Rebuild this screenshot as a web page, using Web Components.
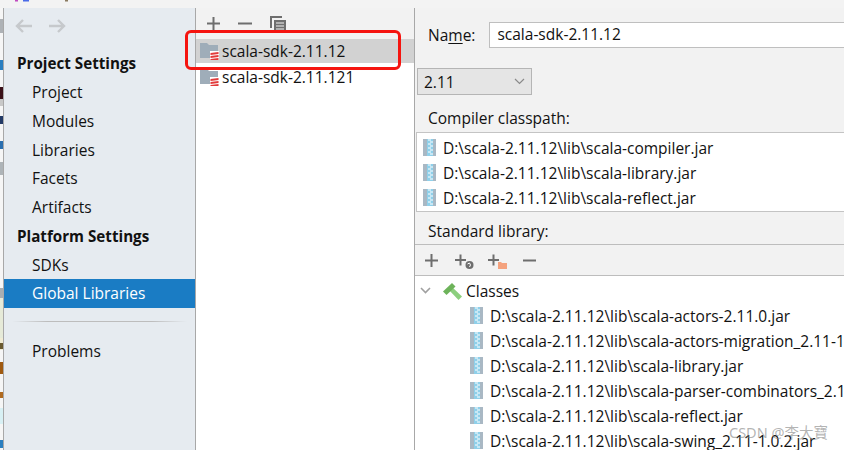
<!DOCTYPE html>
<html>
<head>
<meta charset="utf-8">
<title>Global Libraries</title>
<style>
  html, body { margin: 0; padding: 0; height: 100%; overflow: hidden; background: #fff; }
  body { font: 15.5px "Open Sans", "Noto Sans", sans-serif; color: #111; }
</style>
</head>
<body>
<settings-window></settings-window>

<template id="jar-icon">
  <svg width="13" height="17" viewBox="0 0 13 17"><rect width="13" height="17" fill="#a9b8c4"/><rect x="4" width="6" height="17" fill="#8fd0ea"/><path d="M5 1h3M7 3h3M5 5h3M7 7h3M5 9h3M7 11h3M5 13h3M7 15h3" stroke="#fff" stroke-width="1"/></svg>
</template>

<script>
// small helper, every component gets its own open shadow root
class Base extends HTMLElement {
    constructor() {
        super();
        this.attachShadow({ mode: 'open' });
    }
}

const jarSvg = () => document.getElementById('jar-icon').innerHTML;

class NavItem extends Base {
    connectedCallback() {
        this.shadowRoot.innerHTML = `
            <style>
                :host { display: flex; align-items: center; height: 28.75px; padding-left: 28px; color: #111; white-space: nowrap; }
                :host([heading]) { padding-left: 13px; font-weight: 700; font-size: 15.2px; }
                :host([active]) { background: #1a7cc4; color: #fff; }
            </style>
            <slot></slot>`;
    }
}
customElements.define('nav-item', NavItem);

class AppSidebar extends Base {
    connectedCallback() {
        this.shadowRoot.innerHTML = `
            <style>
                :host { display: flex; flex-direction: column; width: 191px; flex: none; background: #e6ebf0; border-right: 1px solid #a8a8a8; }
                .arrows { display: flex; gap: 15px; height: 35px; padding: 0 0 0 11px; box-sizing: border-box; align-items: center; }
                .sep { height: 1px; margin: 13.5px 8px 14.4px; background: linear-gradient(90deg, #e6ebf0, #bdbdbd 20%, #bdbdbd 80%, #e6ebf0); }
                .gap { height: 6px; }
            </style>
            <div class="arrows">
                <svg width="18" height="14" viewBox="0 0 18 14"><path d="M17 7H2M8 1 2 7l6 6" fill="none" stroke="#c6c9cc" stroke-width="2.4"/></svg>
                <svg width="18" height="14" viewBox="0 0 18 14"><path d="M1 7h15M10 1l6 6-6 6" fill="none" stroke="#c6c9cc" stroke-width="2.4"/></svg>
            </div>
            <div class="gap"></div>
            <nav-item heading>Project Settings</nav-item>
            <nav-item>Project</nav-item>
            <nav-item>Modules</nav-item>
            <nav-item>Libraries</nav-item>
            <nav-item>Facets</nav-item>
            <nav-item>Artifacts</nav-item>
            <nav-item heading>Platform Settings</nav-item>
            <nav-item>SDKs</nav-item>
            <nav-item active>Global Libraries</nav-item>
            <div class="sep"></div>
            <nav-item>Problems</nav-item>`;
    }
}
customElements.define('app-sidebar', AppSidebar);

class SdkRow extends Base {
    connectedCallback() {
        this.shadowRoot.innerHTML = `
            <style>
                :host { display: flex; align-items: center; gap: 3px; height: 24px; padding-left: 4px; white-space: nowrap; }
                :host([selected]) { background: #d2d2d2; }
                svg { flex: none; }
            </style>
            <svg width="19" height="18" viewBox="0 0 19 18">
                <path d="M0 1h7l2 2h9v13H0z" fill="#9fadb9"/>
                <rect x="10" y="9" width="9" height="9" fill="#fff"/>
                <path d="M10.5 11l8-1v2l-8 1zM10.5 14l8-1v2l-8 1zM10.5 17l8-1v2h-8z" fill="#e23b3b"/>
            </svg>
            <slot></slot>`;
    }
}
customElements.define('sdk-row', SdkRow);

class SdkList extends Base {
    connectedCallback() {
        this.shadowRoot.innerHTML = `
            <style>
                :host { display: flex; flex-direction: column; width: 218px; flex: none; background: #fff; border-right: 1px solid #a8a8a8; }
                .bar { display: flex; align-items: center; gap: 18px; height: 31px; padding-left: 11px; background: #f2f2f2; }
                svg { display: block; }
            </style>
            <div class="bar">
                <svg width="13" height="13" viewBox="0 0 13 13"><path d="M6.5 0v13M0 6.5h13" stroke="#6e6e6e" stroke-width="2"/></svg>
                <svg width="14" height="13" viewBox="0 0 14 13"><path d="M0 6.5h14" stroke="#6e6e6e" stroke-width="2"/></svg>
                <svg width="16" height="16" viewBox="0 0 16 16"><path d="M1 12V1h11" fill="none" stroke="#6e6e6e" stroke-width="2"/><rect x="4" y="4" width="12" height="12" fill="#6e6e6e"/><path d="M6 7h8M6 10h8M6 13h8" stroke="#f2f2f2" stroke-width="1.2"/></svg>
            </div>
            <sdk-row selected>scala-sdk-2.11.12</sdk-row>
            <sdk-row style="height:28px">scala-sdk-2.11.121</sdk-row>`;
    }
}
customElements.define('sdk-list', SdkList);

class JarRow extends Base {
    connectedCallback() {
        const indent = this.getAttribute('indent') || '6';
        this.shadowRoot.innerHTML = `
            <style>
                :host { display: flex; align-items: center; gap: 7px; height: 25px; padding-left: ${indent}px; white-space: nowrap; flex: none; }
                svg { flex: none; }
            </style>
            ${jarSvg()}
            <slot></slot>`;
    }
}
customElements.define('jar-row', JarRow);

class LibDetail extends Base {
    connectedCallback() {
        this.shadowRoot.innerHTML = `
            <style>
                :host { display: flex; flex-direction: column; flex: 1; min-width: 0; background: #f2f2f2; overflow: hidden; }
                .name { display: flex; align-items: center; height: 26px; margin-top: 14px; padding-left: 13px; }
                u { text-underline-offset: 2px; }
                .field { margin-left: 14px; flex: 1; height: 26px; box-sizing: border-box; border: 1px solid #bfbfbf; border-right: 0; background: #fff; padding-left: 7px; line-height: 23px; }
                .combo { display: flex; align-items: center; justify-content: space-between; width: 115px; height: 27px; box-sizing: border-box; margin: 20px 0 0 2px; padding: 0 6px 0 6px; border: 1px solid #b5b5b5; background: #e5e5e5; }
                .label { height: 26px; line-height: 26px; padding-left: 13px; margin-top: 10px; }
                .jars { height: 80px; margin-top: 1px; margin-left: 1px; background: #fff; border: 1px solid #c4c4c4; border-right: 0; box-sizing: border-box; padding-top: 2px; }
                .label2 { margin-top: 6px; height: 27px; line-height: 26px; padding-left: 13px; border-bottom: 1px solid #bdbdbd; box-sizing: border-box; }
                .bar { display: flex; align-items: center; height: 31px; padding-left: 10px; border-bottom: 1px solid #bdbdbd; box-sizing: border-box; }
                .tree { flex: 1; background: #fff; overflow: hidden; }
                .root { display: flex; align-items: center; height: 25px; padding: 2px 0 0 5px; }
                svg { display: block; flex: none; }
            </style>
            <div class="name"><span>Na<u>m</u>e:</span><div class="field">scala-sdk-2.11.12</div></div>
            <div class="combo"><span>2.11</span>
                <svg width="11" height="7" viewBox="0 0 11 7"><path d="M1 1l4.5 4.5L10 1" fill="none" stroke="#8a8a8a" stroke-width="1.2"/></svg></div>
            <div class="label">Compiler classpath:</div>
            <div class="jars">
                <jar-row>D:\\scala-2.11.12\\lib\\scala-compiler.jar</jar-row>
                <jar-row>D:\\scala-2.11.12\\lib\\scala-library.jar</jar-row>
                <jar-row>D:\\scala-2.11.12\\lib\\scala-reflect.jar</jar-row>
            </div>
            <div class="label2">Standard library:</div>
            <div class="bar">
                <svg width="13" height="13" viewBox="0 0 13 13" style="margin-right:17px"><path d="M6.5 0v13M0 6.5h13" stroke="#6e6e6e" stroke-width="2"/></svg>
                <svg width="19" height="18" viewBox="0 0 19 18" style="margin-right:14px"><path d="M5.5 3.5v11M0 9h11" stroke="#6e6e6e" stroke-width="2"/><circle cx="14.5" cy="14" r="4" fill="#6e6e6e"/><path d="M12.5 13l2-1 1 2-1 2" stroke="#fff" fill="none"/></svg>
                <svg width="19" height="18" viewBox="0 0 19 18" style="margin-right:16px"><path d="M5.5 3.5v11M0 9h11" stroke="#6e6e6e" stroke-width="2"/><path d="M10 11h3l1 1h5v6h-9z" fill="#f4a27e"/></svg>
                <svg width="13" height="13" viewBox="0 0 13 13"><path d="M0 6.5h13" stroke="#6e6e6e" stroke-width="2"/></svg>
            </div>
            <div class="tree">
                <div class="root">
                    <svg width="20" height="18" viewBox="0 0 20 18" style="display:none"></svg>
                    <svg width="11" height="7" viewBox="0 0 11 7" style="margin-right:12px"><path d="M1 1l4.500 4.500L10 1" fill="none" stroke="#a0a0a0" stroke-width="1.6"/></svg>
                    <svg width="20" height="18" viewBox="0 0 20 18" style="margin-right:3px"><path d="M5 7l3-3 11 10.500-3.500 3.500z" fill="#8ccf7e"/><path d="M0 9.500 9 1l3.500 3.500-9 8.500z" fill="#6db35a"/></svg>
                    <span>Classes</span>
                </div>
                <jar-row indent="55">D:\\scala-2.11.12\\lib\\scala-actors-2.11.0.jar</jar-row>
                <jar-row indent="55">D:\\scala-2.11.12\\lib\\scala-actors-migration_2.11-1</jar-row>
                <jar-row indent="55">D:\\scala-2.11.12\\lib\\scala-library.jar</jar-row>
                <jar-row indent="55">D:\\scala-2.11.12\\lib\\scala-parser-combinators_2.1</jar-row>
                <jar-row indent="55">D:\\scala-2.11.12\\lib\\scala-reflect.jar</jar-row>
                <jar-row indent="55">D:\\scala-2.11.12\\lib\\scala-swing_2.11-1.0.2.jar</jar-row>
            </div>`;
    }
}
customElements.define('lib-detail', LibDetail);

class SettingsWindow extends Base {
    connectedCallback() {
        this.shadowRoot.innerHTML = `
            <style>
                :host { display: flex; flex-direction: column; position: relative; width: 844px; height: 450px; overflow: hidden; }
                .top { height: 8px; flex: none; background: #f3f3f3; }
                .top svg, .edge svg { display: block; }
                .main { display: flex; flex: 1; min-height: 0; }
                .edge { width: 3px; flex: none; background: #f6f6f6; border-right: 1px solid #a8a8a8; }
                /* annotation and watermark lie over the content */
                .mark { position: absolute; left: 185px; top: 30px; width: 216px; height: 40px; box-sizing: border-box; border: 3.5px solid #f5140f; border-radius: 6px; }
                .wm { position: absolute; left: 729px; top: 421px; font: 14.5px "Noto Sans", "Noto Sans CJK SC", sans-serif; color: rgba(130,130,130,.6); white-space: nowrap; }
            </style>
            <div class="top">
                <svg width="120" height="8"><rect x="15" width="3" height="1.5" fill="#c04ac0"/><rect x="23" width="6" height="1.5" fill="#4a6ae8"/><rect x="65" width="3" height="1.5" fill="#8a7a60"/></svg>
            </div>
            <div class="main">
                <div class="edge">
                    <svg width="3" height="442" viewBox="0 8 3 442">
                        <rect y="19" width="3" height="14" fill="#aeb2b6"/>
                        <rect y="60" width="3" height="10" fill="#2a7fc0"/>
                        <rect y="87" width="3" height="12" fill="#3a1018"/>
                        <rect y="99" width="3" height="7" fill="#c8c8c8"/>
                        <rect y="116" width="3" height="8" fill="#223a66"/>
                        <rect y="141" width="3" height="8" fill="#2a6fb0"/>
                        <rect y="162" width="3" height="13" fill="#aeb4b8"/>
                        <rect y="288" width="3" height="10" fill="#a8aeb2"/>
                        <rect y="298" width="3" height="40" fill="#e6ead8"/>
                        <rect y="338" width="3" height="12" fill="#f1ecd4"/>
                        <rect y="343" width="3" height="6" fill="#6a5a30"/>
                        <rect y="362" width="3" height="12" fill="#a05a10"/>
                        <rect y="392" width="3" height="6" fill="#b06a20"/>
                        <rect y="408" width="3" height="16" fill="#d8f0f4"/>
                        <rect y="440" width="3" height="8" fill="#2a7fc0"/>
                    </svg>
                </div>
                <app-sidebar></app-sidebar>
                <sdk-list></sdk-list>
                <lib-detail></lib-detail>
            </div>
            <div class="mark"></div>
            <div class="wm">CSDN @李大寶</div>`;
    }
}
customElements.define('settings-window', SettingsWindow);
</script>
</body>
</html>
